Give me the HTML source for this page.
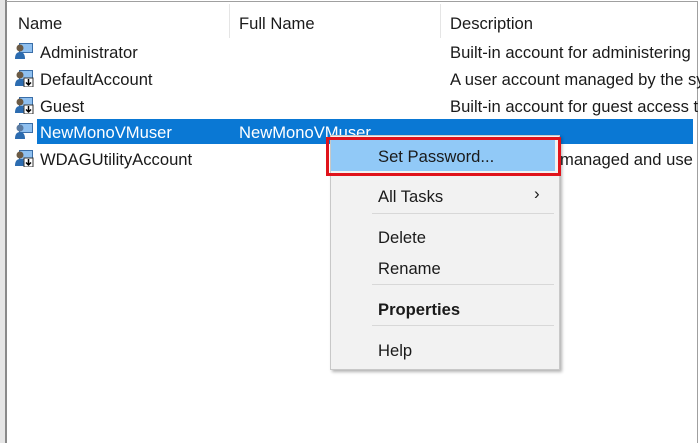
<!DOCTYPE html><html><head><style>
body{margin:0;width:700px;height:443px;overflow:hidden;background:#fff;font-family:"Liberation Sans",sans-serif;font-size:16.6px;color:#1a1a1a;position:relative}
.a{position:absolute;white-space:nowrap}
.ic{position:absolute;left:14px;width:20px;height:18px}
</style></head><body>
<div class="a" style="left:0;top:0;width:6px;height:443px;background:#e6e6e6"></div>
<div class="a" style="left:5px;top:0;width:2px;height:443px;background:#8a8a8a"></div>
<div class="a" style="left:6px;top:1px;width:692px;height:1px;background:#a0a0a0"></div>
<div class="a" style="left:697px;top:1px;width:1px;height:442px;background:#a0a0a0"></div>
<div class="a" style="left:229px;top:4px;width:1px;height:34px;background:#e5e5e5"></div>
<div class="a" style="left:440px;top:4px;width:1px;height:34px;background:#e5e5e5"></div>
<div class="a" style="left:18px;top:14px">Name</div>
<div class="a" style="left:239px;top:14px">Full Name</div>
<div class="a" style="left:450px;top:14px">Description</div>
<div class="a" style="left:37px;top:119px;width:656px;height:25px;background:#0a78d4"></div>
<svg class="ic" style="top:42px" viewBox="0 0 20 18"><rect x="5" y="1" width="14" height="10" fill="#3a6ea8"/><rect x="6" y="2" width="12" height="8" fill="#8fc0f0"/><circle cx="6" cy="6" r="3.5" fill="#6b5a45"/><path d="M1 17q0-7 5-7t5 7z" fill="#2c6cb0"/></svg>
<div class="a" style="left:40px;top:43px">Administrator</div>
<svg class="ic" style="top:69px" viewBox="0 0 20 18"><rect x="5" y="1" width="14" height="10" fill="#3a6ea8"/><rect x="6" y="2" width="12" height="8" fill="#8fc0f0"/><circle cx="6" cy="6" r="3.5" fill="#6b5a45"/><path d="M1 17q0-7 5-7t5 7z" fill="#2c6cb0"/><rect x="10" y="9" width="9" height="9" fill="#fff" stroke="#333"/><path d="M14.5 10v6M12 13.5l2.5 2.5 2.5-2.5" stroke="#000" stroke-width="1.5" fill="none"/></svg>
<div class="a" style="left:40px;top:70px">DefaultAccount</div>
<svg class="ic" style="top:96px" viewBox="0 0 20 18"><rect x="5" y="1" width="14" height="10" fill="#3a6ea8"/><rect x="6" y="2" width="12" height="8" fill="#8fc0f0"/><circle cx="6" cy="6" r="3.5" fill="#6b5a45"/><path d="M1 17q0-7 5-7t5 7z" fill="#2c6cb0"/><rect x="10" y="9" width="9" height="9" fill="#fff" stroke="#333"/><path d="M14.5 10v6M12 13.5l2.5 2.5 2.5-2.5" stroke="#000" stroke-width="1.5" fill="none"/></svg>
<div class="a" style="left:40px;top:97px">Guest</div>
<svg class="ic" style="top:122px" viewBox="0 0 20 18"><rect x="5" y="1" width="14" height="10" fill="#3a6ea8"/><rect x="6" y="2" width="12" height="8" fill="#8fc0f0"/><circle cx="6" cy="6" r="3.5" fill="#5a7aa0"/><path d="M1 17q0-7 5-7t5 7z" fill="#2c6cb0"/></svg>
<div class="a" style="left:40px;top:123px;color:#fff">NewMonoVMuser</div>
<div class="a" style="left:239px;top:123px;color:#fff">NewMonoVMuser</div>
<svg class="ic" style="top:149px" viewBox="0 0 20 18"><rect x="5" y="1" width="14" height="10" fill="#3a6ea8"/><rect x="6" y="2" width="12" height="8" fill="#8fc0f0"/><circle cx="6" cy="6" r="3.5" fill="#6b5a45"/><path d="M1 17q0-7 5-7t5 7z" fill="#2c6cb0"/><rect x="10" y="9" width="9" height="9" fill="#fff" stroke="#333"/><path d="M14.5 10v6M12 13.5l2.5 2.5 2.5-2.5" stroke="#000" stroke-width="1.5" fill="none"/></svg>
<div class="a" style="left:40px;top:150px">WDAGUtilityAccount</div>
<div class="a" style="left:450px;top:43px">Built-in account for administering</div>
<div class="a" style="left:450px;top:70px">A user account managed by the sy</div>
<div class="a" style="left:450px;top:97px">Built-in account for guest access t</div>
<div class="a" style="left:560px;top:150px">managed and use</div>
<div class="a" style="left:330px;top:135px;width:228px;height:233px;background:#f2f2f2;border:1px solid #c8c8c8;box-shadow:2px 2px 3px rgba(0,0,0,.3)"></div>
<div class="a" style="left:331px;top:140px;width:224px;height:31px;background:#91c9f7"></div>
<div class="a" style="left:326px;top:137px;width:229px;height:33px;border:3px solid #e0131b"></div>
<div class="a" style="left:378px;top:147px">Set Password...</div>
<div class="a" style="left:378px;top:187px">All Tasks</div>
<div class="a" style="left:534px;top:184px;font-size:17px">›</div>
<div class="a" style="left:372px;top:213px;width:182px;height:1px;background:#d8d8d8"></div>
<div class="a" style="left:378px;top:228px">Delete</div>
<div class="a" style="left:378px;top:259px">Rename</div>
<div class="a" style="left:372px;top:284px;width:182px;height:1px;background:#d8d8d8"></div>
<div class="a" style="left:378px;top:300px;font-weight:bold">Properties</div>
<div class="a" style="left:372px;top:325px;width:182px;height:1px;background:#d8d8d8"></div>
<div class="a" style="left:378px;top:341px">Help</div>
</body></html>
